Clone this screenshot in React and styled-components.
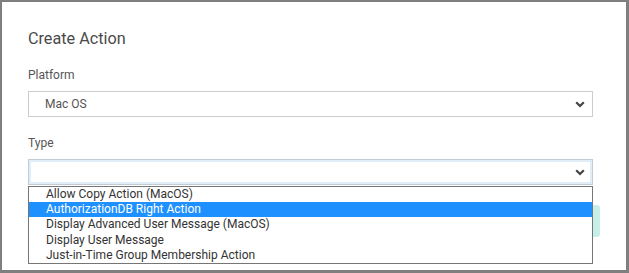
import React from 'react'
import styled, { createGlobalStyle } from 'styled-components'

const GlobalStyle = createGlobalStyle`
    html, body {
        margin: 0;
        padding: 0;
        background: #ffffff;
    }
    * {
        box-sizing: border-box;
    }
`

const Frame = styled.div`
    width: 629px;
    height: 273px;
    border-style: solid;
    border-color: #7f7f7f;
    border-width: 2px 3px 3px 2px;
    background: #ffffff;
    font-family: Roboto, "Liberation Sans", sans-serif;
    overflow: hidden;
`

const Content = styled.div`
    width: 565px;
    margin-left: 26px;
    padding-top: 25px;
    display: flex;
    flex-direction: column;
`

const Title = styled.h2`
    margin: 0 0 17px;
    font-size: 16.2px;
    line-height: 23px;
    font-weight: 400;
    color: #4a4a4a;
`

const Field = styled.div`
    position: relative;
    display: flex;
    flex-direction: column;
    margin-bottom: ${p => p.$gap || 0}px;
`

const Label = styled.label`
    font-size: 12px;
    line-height: 16px;
    color: #555555;
    margin-bottom: 8px;
`

const SelectBox = styled.div`
    height: 26px;
    display: flex;
    align-items: center;
    justify-content: space-between;
    padding: 0 7px 0 16px;
    background: #ffffff;
    border: 1px solid ${p => (p.$focused ? '#c3ccd4' : '#cccccc')};
    box-shadow: ${p => (p.$focused ? 'inset 0 0 0 2px #e0eef9' : 'none')};
    font-size: 12px;
    color: #555555;
`

const Chevron = () => (
    <svg width="10" height="7" viewBox="0 0 10 7">
        <polyline points="1.2,1.2 5,5 8.8,1.2" fill="none" stroke="#444444" strokeWidth="2.2" />
    </svg>
)

const ListBox = styled.ul`
    position: absolute;
    top: 100%;
    left: 0;
    right: 0;
    margin: 1px 0 0;
    padding: 0;
    list-style: none;
    background: #ffffff;
    border: 1px solid #767676;
    z-index: 2;
`

const Option = styled.li`
    height: 15.2px;
    line-height: 15.2px;
    padding-left: 17px;
    font-size: 12px;
    color: ${p => (p.$active ? '#ffffff' : '#333333')};
    background: ${p => (p.$active ? '#1e90ff' : 'transparent')};
    white-space: nowrap;
`

const Footer = styled.div`
    display: flex;
    justify-content: flex-end;
    margin-top: 20px;
    margin-right: -7px;
`

const SaveButton = styled.button`
    height: 32px;
    width: 90px;
    border: none;
    border-radius: 3px;
    background: #c7eee8;
    color: #ffffff;
    font-family: inherit;
    font-size: 13px;
`

const options = [
    'Allow Copy Action (MacOS)',
    'AuthorizationDB Right Action',
    'Display Advanced User Message (MacOS)',
    'Display User Message',
    'Just-in-Time Group Membership Action',
]

export default function App() {
    return (
        <>
            <GlobalStyle />
            <Frame>
                <Content>
                    <Title>Create Action</Title>
                    <Field $gap={18}>
                        <Label>Platform</Label>
                        <SelectBox>
                            <span>Mac OS</span>
                            <Chevron />
                        </SelectBox>
                    </Field>
                    <Field>
                        <Label>Type</Label>
                        <div style={{ position: 'relative' }}>
                            <SelectBox $focused>
                                <span></span>
                                <Chevron />
                            </SelectBox>
                            <ListBox>
                                {options.map((o, i) => (
                                    <Option key={o} $active={i === 1}>{o}</Option>
                                ))}
                            </ListBox>
                        </div>
                    </Field>
                    <Footer>
                        <SaveButton>Save</SaveButton>
                    </Footer>
                </Content>
            </Frame>
        </>
    )
}
